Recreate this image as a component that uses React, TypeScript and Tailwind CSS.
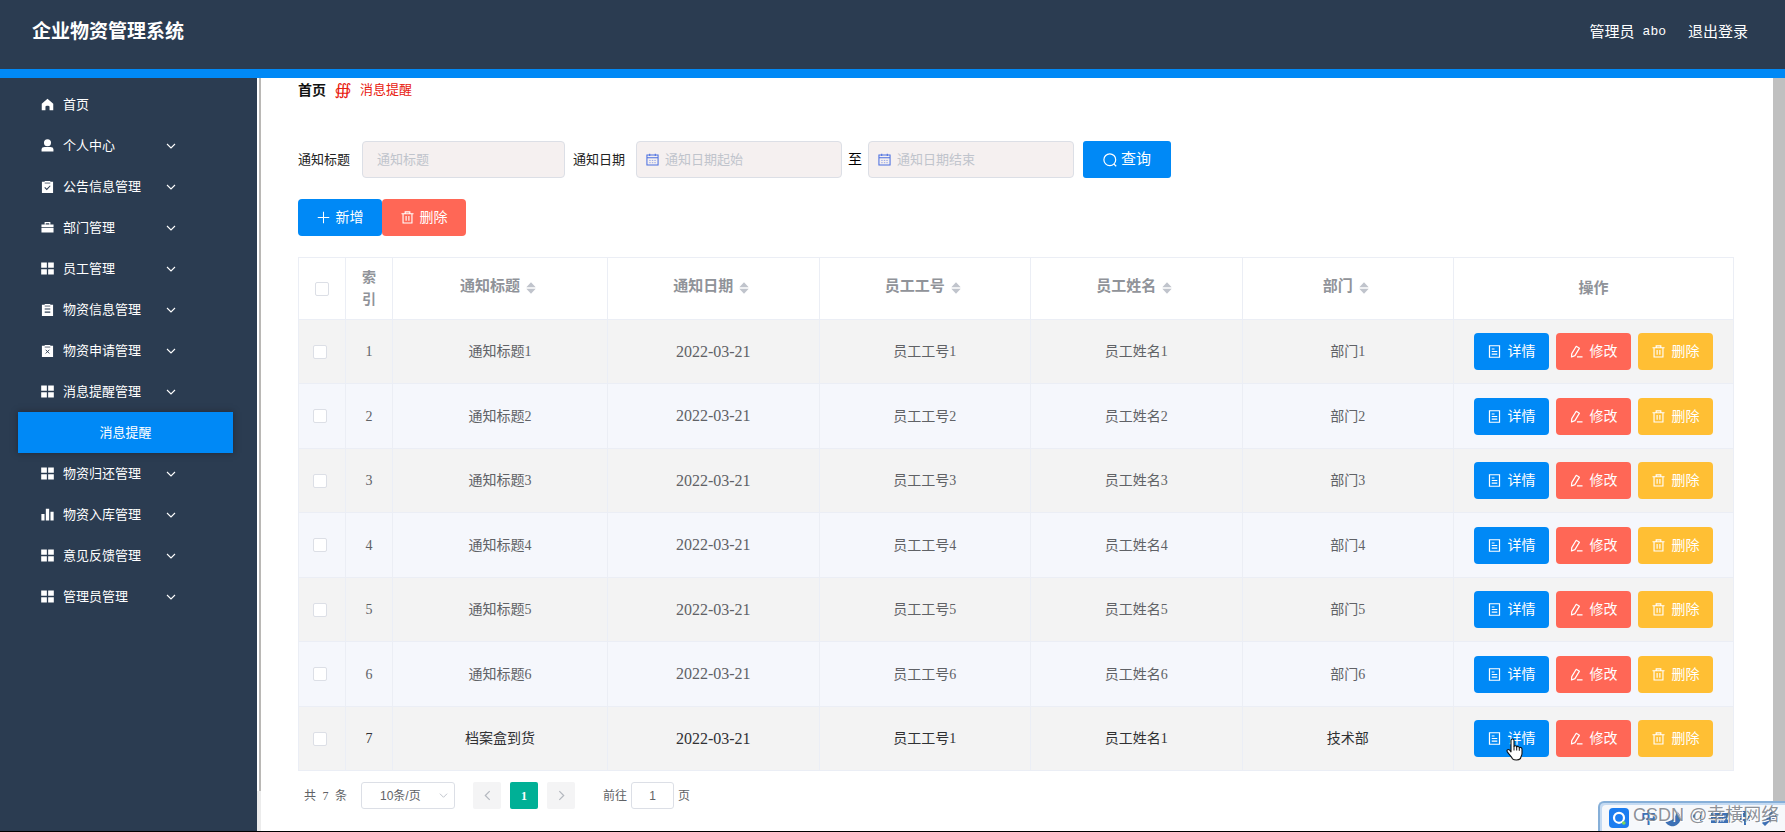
import React from "react";

const sans = "font-['Liberation_Sans','Noto_Sans_CJK_SC',sans-serif]";
const song = "font-['Liberation_Serif','Noto_Sans_CJK_SC',sans-serif]";

type IconName = "home" | "user" | "check" | "case" | "grid" | "list" | "cross" | "bars";

function MenuIcon({ name }: { name: IconName }) {
  const board = "M1 2h3V1h6v1h3v12H1z";
  return (
    <svg viewBox="0 0 14 14" className="size-[13px] shrink-0" fill="#fff" aria-hidden="true">
      {name === "home" && <path d="M7 .8 13.2 6.2V13.2H9.2V9.5C9.2 8 4.8 8 4.8 9.5V13.2H.8V6.2z" />}
      {name === "user" && (
        <>
          <circle cx="7" cy="4" r="3.8" />
          <path d="M.6 13.4v-2C.6 9.4 2 8.6 4 8.6h6c2 0 3.4.8 3.4 2.8v2z" />
        </>
      )}
      {name === "case" && (
        <>
          <path d="M.5 7.6h13v4.8H.5zM.5 3.8h13v2.9H.5z" />
          <path d="M4.5 4V1.8h5V4" fill="none" stroke="#fff" strokeWidth="1.2" />
        </>
      )}
      {name === "grid" && <path d="M.2.6h6.1v5.7H.2zM7.7.6h6.1v5.7H7.7zM.2 7.8h6.1v5.7H.2zM7.7 7.8h6.1v5.7H7.7z" />}
      {name === "bars" && <path d="M.4 6.5h3.4v7H.4zM5.2.8h3.6v12.7H5.2zM10.2 4h3.4v9.5h-3.4z" />}
      {(name === "check" || name === "list" || name === "cross") && (
        <>
          <path d={board} />
          <path d="M4 3.3h6" stroke="#2b3c51" strokeWidth=".8" fill="none" />
        </>
      )}
      {name === "check" && <path d="m4 8 2.2 2.2L10 6.200" fill="none" stroke="#2b3c51" strokeWidth="1.1" />}
      {name === "list" && <path d="M4 6.5h6M4 9.8h6" fill="none" stroke="#2b3c51" strokeWidth="1.2" />}
      {name === "cross" && <path d="m5 6.2 4 4M9 6.2l-4 4" fill="none" stroke="#2b3c51" strokeWidth="1" />}
    </svg>
  );
}

function Chevron({ className }: { className: string }) {
  return (
    <svg viewBox="0 0 10 10" className={className} fill="none" stroke="currentColor" aria-hidden="true">
      <path d="m1 3 4 4 4-4" strokeWidth="1.1" />
    </svg>
  );
}

function TrashIcon() {
  return (
    <svg viewBox="0 0 14 14" className="size-[13px]" fill="none" stroke="currentColor" strokeWidth="1.2" aria-hidden="true">
      <path d="M.5 3h13M4.5 2.8V1h5v1.800M2.2 3.2v9.7h9.6V3.2M5.5 5.5v5M8.5 5.5v5" />
    </svg>
  );
}

function DetailIcon() {
  return (
    <svg viewBox="0 0 14 14" className="size-[13px]" fill="none" stroke="currentColor" strokeWidth="1.300" aria-hidden="true">
      <path d="M1.6.8h10.8v12.400H1.6zM4 4.300h3M4 7h6M4 9.800h6" />
    </svg>
  );
}

function EditIcon() {
  return (
    <svg viewBox="0 0 14 14" className="size-[13px]" fill="none" stroke="currentColor" strokeWidth="1.300" strokeLinejoin="round" aria-hidden="true">
      <path d="M6.7 1.4 10.2 3.4 5.3 11.5 1.6 12.9 1.9 9.3zM7.5 12.8h6" />
    </svg>
  );
}

function PlusIcon() {
  return (
    <svg viewBox="0 0 14 14" className="size-[13px]" fill="none" stroke="currentColor" strokeWidth="1.1" aria-hidden="true">
      <path d="M7 .8v12.4M.8 7h12.4" />
    </svg>
  );
}

function SearchIcon() {
  return (
    <svg viewBox="0 0 14 14" className="size-[14px]" fill="none" stroke="currentColor" strokeWidth="1.2" aria-hidden="true">
      <circle cx="6.8" cy="6.7" r="5.9" />
      <path d="m10.9 11 2.3 2.2" />
    </svg>
  );
}

function CalendarIcon() {
  return (
    <svg viewBox="0 0 14 14" className="pointer-events-none absolute top-3 left-2.5 size-[13px]" fill="none" stroke="#4a6ee0" aria-hidden="true">
      <path d="M1 2.2h12v10.6H1zM1 5.2h12M4 .7v2.5M10 .7v2.5" strokeWidth="1.1" />
      <path d="M3.5 8h1.5M6.3 8h1.5M9 8h1.5M3.5 10.4h1.5M6.3 10.4h1.5M9 10.4h1.5" strokeWidth="1" opacity=".6" />
    </svg>
  );
}

const menu: { icon: IconName; label: string; child?: string }[] = [
  { icon: "user", label: "个人中心" },
  { icon: "check", label: "公告信息管理" },
  { icon: "case", label: "部门管理" },
  { icon: "grid", label: "员工管理" },
  { icon: "list", label: "物资信息管理" },
  { icon: "cross", label: "物资申请管理" },
  { icon: "grid", label: "消息提醒管理", child: "消息提醒" },
  { icon: "grid", label: "物资归还管理" },
  { icon: "bars", label: "物资入库管理" },
  { icon: "grid", label: "意见反馈管理" },
  { icon: "grid", label: "管理员管理" },
];

const rows = [
  ...[1, 2, 3, 4, 5, 6].map((n) => ({
    id: n,
    title: `通知标题${n}`,
    date: "2022-03-21",
    no: `员工工号${n}`,
    name: `员工姓名${n}`,
    dept: `部门${n}`,
  })),
  { id: 7, title: "档案盒到货", date: "2022-03-21", no: "员工工号1", name: "员工姓名1", dept: "技术部" },
];

const box = "block size-[14px] appearance-none rounded-[2px] border border-[#dcdfe6] bg-white mx-auto";
const field = "h-[37px] w-full rounded border border-[#dcdfe6] bg-[#f5f0f0] text-[13px] placeholder:text-[#c0c4cc]";
const action = "flex h-[37px] w-[75px] items-center justify-center gap-[7px] rounded text-[14px] text-white";
const cell = "border-r border-b border-[#ebeef5] p-0 text-center";

function Header() {
  return (
    <header className="flex h-[78px] shrink-0 items-start justify-between border-b-[9px] border-[#0089f6] bg-[#2b3c51] pr-[37px] pl-8 text-white">
      <h1 className="text-[19px] leading-[64px] font-bold">企业物资管理系统</h1>
      <div className="flex items-center gap-[22px] text-[15px] leading-[64px]">
        <span className="flex gap-2">
          管理员
          <span className="font-['Liberation_Mono',monospace] text-[13px]">abo</span>
        </span>
        <a href="#logout">退出登录</a>
      </div>
    </header>
  );
}

function Sidebar() {
  return (
    <nav className="w-[257px] shrink-0 bg-[#2b3c51] pt-1.5 text-[13px] text-white">
      <ul>
        <li>
          <a href="#home" className="flex h-[41px] items-center gap-[9px] pl-[41px]">
            <MenuIcon name="home" />
            首页
          </a>
        </li>
        {menu.map((m) => (
          <li key={m.label}>
            <button type="button" className="flex h-[41px] w-44 items-center gap-[9px] pl-[41px]">
              <MenuIcon name={m.icon} />
              {m.label}
              <Chevron className="ml-auto size-[10px]" />
            </button>
            {m.child && (
              <a
                href="#notice"
                className="mr-6 ml-[18px] flex h-[41px] items-center justify-center bg-[#0089f6] shadow-[0_0_6px_rgba(30,20,20,0.5)]"
              >
                {m.child}
              </a>
            )}
          </li>
        ))}
      </ul>
    </nav>
  );
}

function SearchForm() {
  return (
    <form className="flex items-center text-[13px] text-[#222]" onSubmit={(e) => e.preventDefault()}>
      <label htmlFor="title" className="mr-3">通知标题</label>
      <div className="w-[203px]">
        <input id="title" type="text" placeholder="通知标题" className={`${field} px-3.5`} />
      </div>
      <label htmlFor="start" className="mr-[11px] ml-2">通知日期</label>
      <div className="relative w-[206px]">
        <CalendarIcon />
        <input id="start" type="text" placeholder="通知日期起始" className={`${field} pr-2 pl-7`} />
      </div>
      <label htmlFor="end" className="mx-[6px] text-[14px] text-black">至</label>
      <div className="relative w-[206px]">
        <CalendarIcon />
        <input id="end" type="text" placeholder="通知日期结束" className={`${field} pr-2 pl-7`} />
      </div>
      <button type="submit" className="ml-[9px] flex h-[37px] w-[88px] items-center justify-center gap-1 rounded-[3px] bg-[#0089f6] text-[15px] text-white">
        <SearchIcon />
        查询
      </button>
    </form>
  );
}

function SortHeader({ label }: { label: string }) {
  return (
    <th className={`${cell} text-[15px] font-bold`}>
      <button type="button" className="mr-1 mb-1 inline-flex items-center gap-1.5">
        {label}
        <svg viewBox="0 0 10 12" className="mt-0.5 h-3 w-2.5" fill="#c0c4cc" aria-hidden="true">
          <path d="M5 .3 9.7 5.2H.3zM.3 6.8h9.4L5 11.7z" />
        </svg>
      </button>
    </th>
  );
}

function DataTable() {
  return (
    <table className={`${song} mt-[21px] w-full table-fixed border-separate border-spacing-0 border-t border-l border-[#ebeef5] text-[14px] text-[#606266]`}>
      <colgroup>
        <col className="w-[47px]" />
        <col className="w-[47px]" />
        <col className="w-[215px]" />
        <col />
        <col />
        <col />
        <col />
        <col className="w-[280px]" />
      </colgroup>
      <thead className="text-[#909399]">
        <tr className="h-[62px]">
          <th className={cell}>
            <input type="checkbox" aria-label="全选" className={box} />
          </th>
          <th className={`${cell} px-3 leading-[22px] font-bold`}>索引</th>
          <SortHeader label="通知标题" />
          <SortHeader label="通知日期" />
          <SortHeader label="员工工号" />
          <SortHeader label="员工姓名" />
          <SortHeader label="部门" />
          <th className={`${cell} text-[15px] font-bold`}>操作</th>
        </tr>
      </thead>
      <tbody>
        {rows.map((r) => (
          <tr key={r.id} className="odd:h-16 odd:bg-[#f3f3f3] even:h-[65px] even:bg-[#f5f7fc] last:text-[#303133]">
            <td className={`${cell} pr-1`}>
              <input type="checkbox" aria-label={`选择第${r.id}行`} className={box} />
            </td>
            <td className={cell}>{r.id}</td>
            <td className={cell}>{r.title}</td>
            <td className={`${cell} text-[16px]`}>{r.date}</td>
            <td className={cell}>{r.no}</td>
            <td className={cell}>{r.name}</td>
            <td className={cell}>{r.dept}</td>
            <td className={cell}>
              <div className={`${sans} flex justify-center gap-[7px]`}>
                <div className="relative">
                  <button type="button" className={`${action} bg-[#0089f6]`}>
                    <DetailIcon />
                    详情
                  </button>
                  {r.id === 7 && <HandPointer />}
                </div>
                <button type="button" className={`${action} bg-[#ff6756]`}>
                  <EditIcon />
                  修改
                </button>
                <button type="button" className={`${action} bg-[#ffbf34]`}>
                  <TrashIcon />
                  删除
                </button>
              </div>
            </td>
          </tr>
        ))}
      </tbody>
    </table>
  );
}

function HandPointer() {
  return (
    <svg viewBox="0 0 17 23" className="pointer-events-none absolute top-[18px] left-8 h-[23px] w-[17px]" aria-hidden="true">
      <path
        d="M5 2.5C5 .5 8 .5 8 2.5V8.5C8.3 7.3 10.5 7.5 10.7 9 11.3 8 13.2 8.4 13.3 9.8 14.2 9 16 9.6 16 11.3V15.5C16 17.5 14.7 18.7 14.5 20.5 12.5 22.5 8.5 22.5 6.5 20.8 5.5 18.5 3 16.5 1.2 13.6.2 11.8 2.5 10.7 3.7 12.2L5 13.8z"
        fill="#fff"
        stroke="#111"
        strokeWidth="1.1"
        strokeLinejoin="round"
      />
      <path d="M8 8.5v4M10.7 9v3.5M13.3 9.8v3" fill="none" stroke="#111" />
    </svg>
  );
}

function Pagination() {
  return (
    <div className={`${song} mt-[11px] flex h-[27px] items-center pl-1.5 text-[12px] text-[#606266]`}>
      <span className="flex w-[43px] justify-between">
        <span>共</span>
        <span>7</span>
        <span>条</span>
      </span>
      <div className={`${sans} relative ml-[14px] text-[#606266]`}>
        <select aria-label="每页条数" className="h-[27px] w-[94px] appearance-none rounded-[3px] border border-[#dcdfe6] bg-white pl-[18px] text-[12px]">
          <option>10条/页</option>
        </select>
        <Chevron className="pointer-events-none absolute top-[9px] right-[7px] size-[9px] text-[#c0c4cc]" />
      </div>
      <div className="ml-[18px] flex gap-[9px]">
        <button type="button" aria-label="上一页" className="flex h-[27px] w-7 items-center justify-center rounded-[2px] bg-[#f4f4f5] text-[#b4b8bf]">
          <Chevron className="size-[11px] rotate-90" />
        </button>
        <button type="button" className="h-[27px] w-7 rounded-[2px] bg-[#00b096] font-bold text-white">1</button>
        <button type="button" aria-label="下一页" className="flex h-[27px] w-7 items-center justify-center rounded-[2px] bg-[#f4f4f5] text-[#b4b8bf]">
          <Chevron className="size-[11px] -rotate-90" />
        </button>
      </div>
      <label htmlFor="page" className="ml-7">前往</label>
      <input id="page" type="text" defaultValue="1" className={`${sans} mx-1 h-[27px] w-[43px] rounded-[3px] border border-[#dcdfe6] text-center text-[12px]`} />
      <span>页</span>
    </div>
  );
}

function InputMethodBar() {
  return (
    <div className="absolute right-0 bottom-0 h-[30px] w-[187px] rounded-tl-md border-t-2 border-l-2 border-[#86afd8] bg-[#c4daf2] pt-0.5 pl-0.5">
      <div className="relative flex h-full items-center rounded-tl bg-[#f6f8fb] pl-[7px] text-[#3c70b5]">
        <svg viewBox="0 0 20 20" className="size-5" aria-hidden="true">
          <rect width="20" height="20" rx="4" fill="#1c7df0" />
          <circle cx="10" cy="9.8" r="5" fill="none" stroke="#fff" strokeWidth="2.2" />
          <circle cx="14.8" cy="15" r="1.8" fill="#7ed957" />
        </svg>
        <span className="ml-3 text-[15px] leading-[18px] font-bold">中</span>
        <svg viewBox="0 0 120 18" className="ml-2 h-[18px] w-[120px]" fill="currentColor" aria-hidden="true">
          <path d="M12 2a8 8 0 1 1-11 10A9 9 0 0 0 12 2z" />
          <circle cx="30" cy="7" r="1.8" />
          <path d="M36 6h3l-1 6h-2z" />
          <path d="M47 4h17v10H47z" />
          <path d="M49 7h13M49 9.5h13M51 12h9" stroke="#f6f8fb" strokeDasharray="1.5 1" />
          <path d="M79 2h4v6h-4zM76 7h2v3h6V7h2v5h-4v4h-2v-4h-4z" />
          <path d="m98 14 7-7a4.500 4.500 0 0 1 5-5l-2 3 2 2 3-2a4.500 4.500 0 0 1-5 5l-7 7z" />
        </svg>
        <span className="absolute top-0.5 left-[31px] text-[18px] leading-4 whitespace-nowrap text-[#70757d]/80 [text-shadow:1px_1px_0_#fff]">
          CSDN @幸橫网络
        </span>
      </div>
    </div>
  );
}

export default function App() {
  return (
    <div className={`${sans} relative flex min-h-screen flex-col border-b border-black bg-white`}>
      <Header />
      <div className="flex flex-1">
        <Sidebar />
        <div className="flex w-1 shrink-0 flex-col bg-[#ececec] pb-10">
          <div className="flex-1 border-l-2 border-white bg-[#bab8b5]" />
        </div>
        <main className="min-w-0 flex-1 pr-[39px] pl-[37px]">
          <nav aria-label="面包屑" className="flex h-6 items-center text-[13px] text-[#e8200f]">
            <a href="#home" className="text-[14px] font-bold text-[#111]">首页</a>
            <span className="mx-2 w-[18px] text-center font-['DejaVu_Sans',sans-serif] text-[16px] leading-4 italic">∰</span>
            <span>消息提醒</span>
          </nav>
          <div className="mt-[39px]">
            <SearchForm />
          </div>
          <div className="mt-[21px] flex text-[14px] text-white">
            <button type="button" className="flex h-[37px] w-[84px] items-center justify-center gap-1.5 rounded bg-[#0089f6]">
              <PlusIcon />
              新增
            </button>
            <button type="button" className="flex h-[37px] w-[84px] items-center justify-center gap-1.5 rounded bg-[#ff6756]">
              <TrashIcon />
              删除
            </button>
          </div>
          <DataTable />
          <Pagination />
        </main>
        <div className="w-3 shrink-0 bg-[#c0c0c0]" />
      </div>
      <InputMethodBar />
    </div>
  );
}
